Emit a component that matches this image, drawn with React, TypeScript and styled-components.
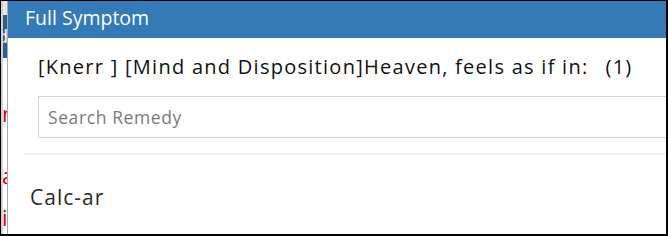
import React from "react";
import styled, { createGlobalStyle } from "styled-components";

const GlobalStyle = createGlobalStyle`
  html, body {
    margin: 0;
    padding: 0;
    background: #ffffff;
  }
  body {
    font-family: "Open Sans", "Noto Sans", "Liberation Sans", sans-serif;
  }
`;

const Frame = styled.div`
  box-sizing: border-box;
  width: 668px;
  height: 236px;
  border-style: solid;
  border-color: #000;
  border-width: 1px 2px 2px 1px;
  display: flex;
  overflow: hidden;
  background: #fff;
`;

const BackPage = styled.div`
  width: 6px;
  flex-shrink: 0;
  display: flex;
  border-right: 1px solid #a9a9a9;
`;

const BackEdge = styled.div`
  width: 2px;
  background: #d2d2d2;
`;

const BackContent = styled.div`
  width: 4px;
  overflow: hidden;
  display: flex;
  flex-direction: column;
  background: #fff;
`;

const BackTop = styled.div`
  height: 14px;
  flex-shrink: 0;
  background: #e6e6e6;
`;

const BackNav = styled.div`
  height: 43px;
  flex-shrink: 0;
  background: #2c5f91;
  color: #fff;
  font-size: 18px;
  line-height: 43px;
  white-space: nowrap;
  text-indent: -6px;
`;

const BackText = styled.div<{ gap: number }>`
  margin-top: ${(p) => p.gap}px;
  flex-shrink: 0;
  color: #d40000;
  font-size: 22px;
  line-height: 22px;
  white-space: nowrap;
  text-indent: -1px;
`;

const Dialog = styled.div`
  flex: 1;
  min-width: 0;
  overflow: hidden;
  display: flex;
  flex-direction: column;
`;

const TitleBar = styled.div`
  height: 37px;
  background: #337ab7;
  color: #fff;
  font-size: 19.5px;
  line-height: 34px;
  padding-left: 17px;
  flex-shrink: 0;
`;

const Body = styled.div`
  margin-right: -40px;
  display: flex;
  flex-direction: column;
`;

const Heading = styled.div`
  padding: 16px 0 0 30px;
  height: 42px;
  box-sizing: border-box;
  font-size: 20px;
  letter-spacing: 1.27px;
  line-height: 26px;
  color: #111;
  white-space: nowrap;
`;

const Count = styled.span`
  margin-left: 17px;
`;

const SearchRow = styled.div`
  padding: 16px 0 0 30px;
`;

const SearchInput = styled.input`
  box-sizing: border-box;
  width: 100%;
  height: 42px;
  border: 1px solid #d4d4d4;
  padding: 0 9px;
  font-family: "Open Sans", "Noto Sans", "Liberation Sans", sans-serif;
  font-size: 17.5px;
  letter-spacing: 0.6px;
  color: #333;
  outline: none;
  &::placeholder {
    color: #7a7a7a;
  }
`;

const Divider = styled.div`
  margin: 15px 0 0 16px;
  height: 2px;
  background: #f1f1f1;
`;

const ResultList = styled.div`
  padding: 28px 0 0 22px;
`;

const Remedy = styled.div`
  font-size: 21px;
  letter-spacing: 1px;
  line-height: 28px;
  color: #2a2a2a;
`;

export default function App() {
  return (
    <>
      <GlobalStyle />
      <Frame>
        <BackPage>
          <BackEdge />
          <BackContent>
            <BackTop />
            <BackNav>d</BackNav>
            <BackText gap={44}>n</BackText>
            <BackText gap={40}>a</BackText>
            <BackText gap={20}>i</BackText>
          </BackContent>
        </BackPage>
        <Dialog>
          <TitleBar>Full Symptom</TitleBar>
          <Body>
            <Heading>
              [Knerr ] [Mind and Disposition]Heaven, feels as if in:
              <Count>(1)</Count>
            </Heading>
            <SearchRow>
              <SearchInput placeholder="Search Remedy" />
            </SearchRow>
            <Divider />
            <ResultList>
              <Remedy>Calc-ar</Remedy>
            </ResultList>
          </Body>
        </Dialog>
      </Frame>
    </>
  );
}
